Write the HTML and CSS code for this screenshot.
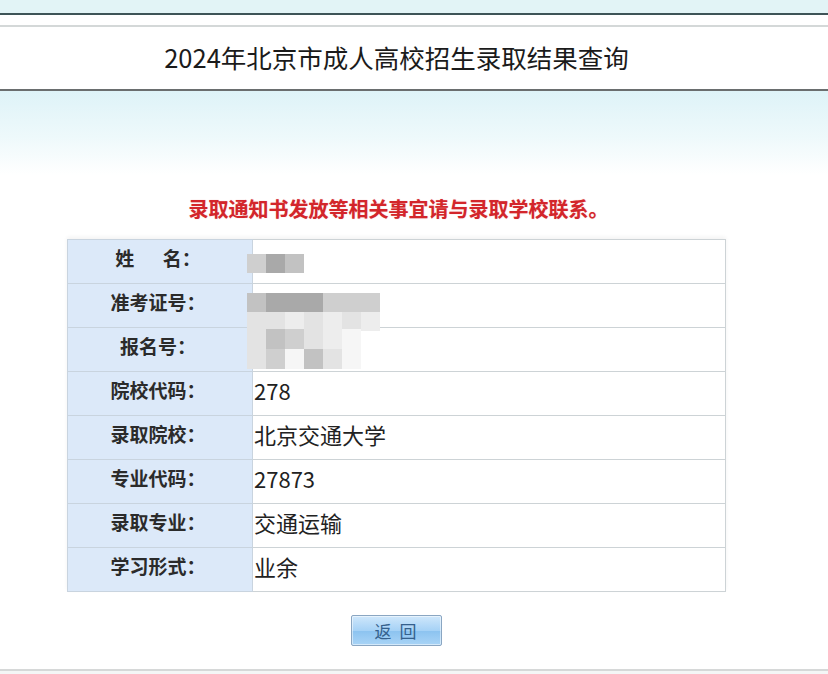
FILE: index.html
```html
<!DOCTYPE html>
<html lang="zh-CN">
<head>
    <meta charset="UTF-8">
    <meta name="viewport" content="width=device-width, initial-scale=1.0">
    <title>2024年北京市成人高校招生录取结果查询</title>
    <link rel="stylesheet" href="styles.css">
</head>
<body>

    <!-- Top strip -->
    <div class="top-strip"></div>

    <!-- Title bar -->
    <div class="title-bar">
        <div class="content">
            <h1 class="page-title">2024年北京市成人高校招生录取结果查询</h1>
        </div>
    </div>

    <!-- Gradient banner -->
    <div class="banner"></div>

    <div class="content">
        <p class="notice">录取通知书发放等相关事宜请与录取学校联系。</p>

        <table class="result-table">
            <tr>
                <th>姓&emsp;&ensp;名：</th>
                <td>
                    <div class="mosaic mosaic-name">
                        <span class="m1"></span><span class="m2"></span><span class="m3"></span>
                    </div>
                </td>
            </tr>
            <tr>
                <th>准考证号：</th>
                <td>
                    <div class="mosaic mosaic-wide">
                        <span class="m3"></span><span class="m2"></span><span class="m2"></span><span class="m2"></span><span class="m1"></span><span class="m1"></span><span class="m1"></span>
                        <span class="m4"></span><span class="m4"></span><span class="m5"></span><span class="m4"></span><span class="m5"></span><span class="m4"></span><span class="m5"></span>
                    </div>
                </td>
            </tr>
            <tr>
                <th>报名号：</th>
                <td>
                    <div class="mosaic mosaic-id">
                        <span class="m4"></span><span class="m3"></span><span class="m1"></span><span class="m4"></span><span class="m5"></span><span class="m6"></span>
                        <span class="m4"></span><span class="m1"></span><span class="m6"></span><span class="m3"></span><span class="m4"></span><span class="m6"></span>
                    </div>
                </td>
            </tr>
            <tr>
                <th>院校代码：</th>
                <td>278</td>
            </tr>
            <tr>
                <th>录取院校：</th>
                <td>北京交通大学</td>
            </tr>
            <tr>
                <th>专业代码：</th>
                <td>27873</td>
            </tr>
            <tr>
                <th>录取专业：</th>
                <td>交通运输</td>
            </tr>
            <tr>
                <th>学习形式：</th>
                <td>业余</td>
            </tr>
        </table>

        <div class="actions">
            <button class="back-button" type="button">返 回</button>
        </div>
    </div>

    <div class="footer"></div>

</body>
</html>
```

FILE: styles.css
```css
/* General Styles */
body {
    margin: 0;
    background-color: #fff;
    font-family: "Noto Sans CJK SC", "Noto Sans", sans-serif;
    color: #222;
    overflow: hidden;
}

.content {
    width: 793px;
}

/* Header */
.top-strip {
    height: 13px;
    background-color: #e2f4f6;
    border-bottom: 2px solid #3e5457;
}

.title-bar {
    margin-top: 10px;
    border-top: 2px solid #d4d8d8;
    border-bottom: 2px solid #6a6e6f;
    background-color: #fff;
}

.page-title {
    margin: 0;
    height: 62px;
    line-height: 59px;
    text-align: center;
    font-size: 25.5px;
    font-weight: 400;
    color: #1b1b1b;
}

.banner {
    height: 84px;
    background: linear-gradient(#def3f8, #eef9fb 55%, #fff);
}

/* Notice */
.notice {
    margin: 0;
    padding-top: 21px;
    padding-left: 4px;
    height: 43px;
    line-height: 26px;
    text-align: center;
    font-size: 20px;
    font-weight: 700;
    color: #d3262b;
    text-shadow: 0 0 1px rgba(211, 38, 43, 0.4);
}

/* Result table */
.result-table {
    margin: 0 auto;
    width: 659px;
    border-collapse: collapse;
    box-shadow: 0 -2px 4px rgba(0, 0, 0, 0.05);
}

.result-table th,
.result-table td {
    height: 35px;
    padding: 0 0 8px;
    border: 1px solid #cdd3d6;
}

.result-table th {
    width: 180px;
    padding-right: 4px;
    background-color: #dce9f9;
    border-color: #c9d4df;
    text-align: center;
    font-size: 19px;
    font-weight: 700;
    color: #2b2b2b;
}

.result-table td {
    padding-left: 1px;
    text-align: left;
    font-size: 22px;
    color: #222;
}

/* Blurred personal data */
.mosaic {
    display: grid;
    grid-template-columns: repeat(3, 19px);
    grid-auto-rows: 19px;
    filter: blur(0.6px);
    margin-left: -7px;
}

.mosaic-name {
    margin-top: 6px;
    margin-bottom: -6px;
}

.mosaic-wide {
    grid-template-columns: repeat(7, 19px);
    margin-top: 8px;
    margin-bottom: -12px;
}

.mosaic-id {
    grid-template-columns: repeat(6, 19px);
    grid-auto-rows: 20px;
    margin-top: 0;
    margin-bottom: -6px;
}

.m1 { background-color: #cfcfcf; }
.m2 { background-color: #a9a9a9; }
.m3 { background-color: #c2c2c2; }
.m4 { background-color: #e3e3e3; }
.m5 { background-color: #ededed; }
.m6 { background-color: #f6f6f6; }

/* Button */
.actions {
    display: flex;
    justify-content: center;
    padding: 23px 0 23px;
}

.back-button {
    width: 91px;
    height: 31px;
    padding: 0;
    font-family: "Noto Sans CJK SC", sans-serif;
    font-size: 17px;
    color: #34608c;
    letter-spacing: 2px;
    background: linear-gradient(#cfe7fb, #a6d2f6 50%, #8cc3f0 52%, #a9d4f6);
    border: 1px solid #8aa6c2;
    border-radius: 2px;
    box-shadow: inset 0 0 0 1px rgba(255, 255, 255, 0.5);
    cursor: pointer;
}

.back-button:hover {
    background: linear-gradient(#dbeefc, #b5dbf8);
}

.footer {
    height: 10px;
    border-top: 2px solid #d6d8d8;
    background-color: #f4f6f6;
}
```
